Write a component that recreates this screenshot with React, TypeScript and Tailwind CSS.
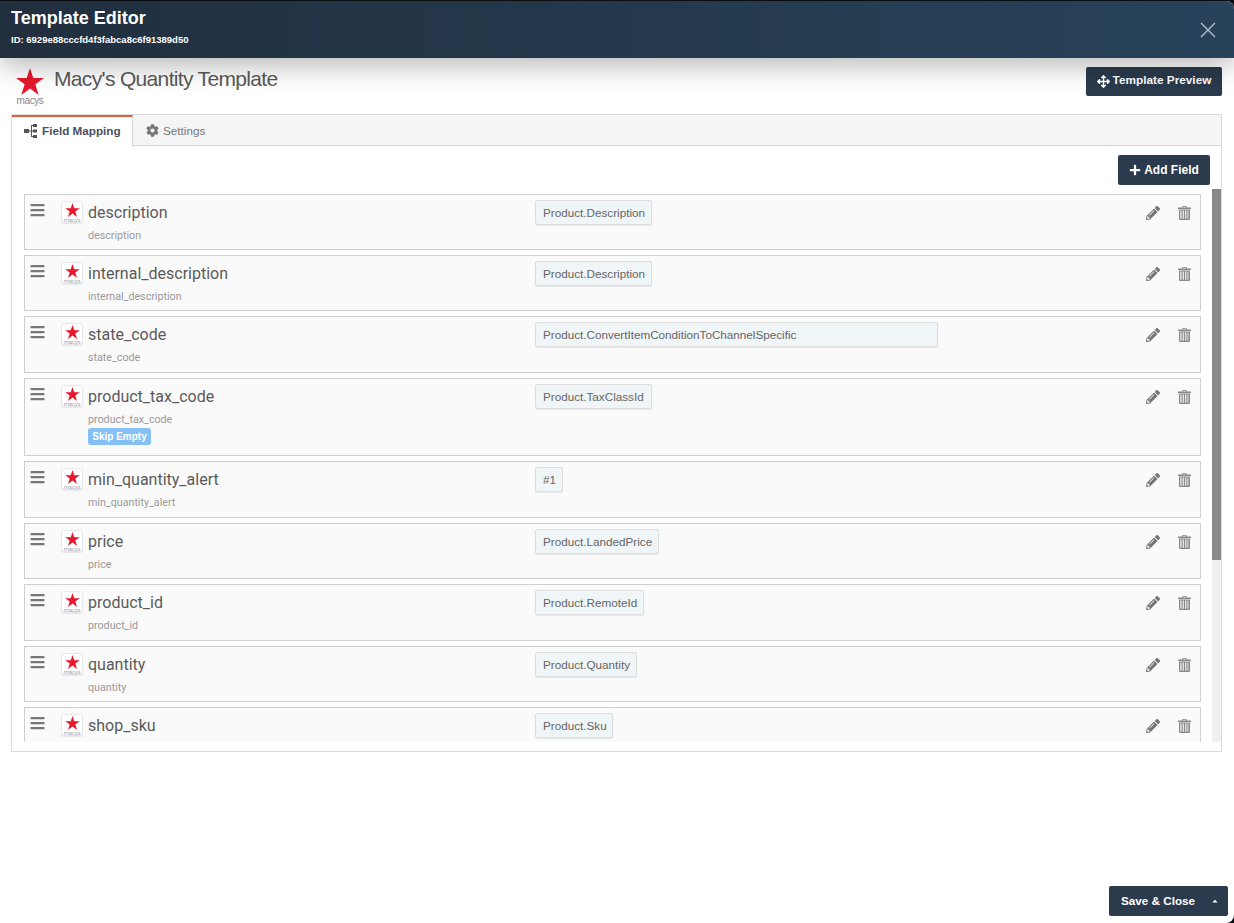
import { FaBars, FaCog, FaPencilAlt, FaPlus, FaArrowsAlt, FaCaretUp } from "react-icons/fa";

type Field = {
  name: string;
  source: string;
  width: string;
  skipEmpty?: boolean;
};

const fields: Field[] = [
  { name: "description", source: "Product.Description", width: "w-[117px]" },
  { name: "internal_description", source: "Product.Description", width: "w-[117px]" },
  { name: "state_code", source: "Product.ConvertItemConditionToChannelSpecific", width: "w-[403px]" },
  { name: "product_tax_code", source: "Product.TaxClassId", width: "w-[117px]", skipEmpty: true },
  { name: "min_quantity_alert", source: "#1", width: "w-[28px]" },
  { name: "price", source: "Product.LandedPrice", width: "w-[124px]" },
  { name: "product_id", source: "Product.RemoteId", width: "w-[109px]" },
  { name: "quantity", source: "Product.Quantity", width: "w-[102px]" },
  { name: "shop_sku", source: "Product.Sku", width: "w-[78px]" },
];

function Star({ className }: { className: string }) {
  return (
    <svg viewBox="0 0 24 23" className={className} fill="currentColor">
      <path d="M12 0l2.83 8.6H24l-7.42 5.32L19.42 23 12 17.4 4.58 23l2.84-9.08L0 8.6h9.17z" />
    </svg>
  );
}

function MacysLogo({ large }: { large?: boolean }) {
  if (large) {
    return (
      <div className="flex h-[38px] w-[38px] shrink-0 flex-col items-center rounded-[4px] bg-white">
        <Star className="mt-[1px] h-[27px] w-[28px] text-[#e8172c]" />
        <span className="mt-[1px] text-[10px] leading-[9px] font-light tracking-[-0.4px] text-[#888]">macys</span>
      </div>
    );
  }
  return (
    <div className="flex h-[22px] w-[22px] shrink-0 flex-col items-center rounded-[3px] border border-[#e8e8e8] bg-white shadow-[0_1px_1px_rgba(0,0,0,0.08)]">
      <Star className="mt-[1px] h-[14px] w-[15px] text-[#e8172c]" />
      <span className="text-[6px] leading-[5px] tracking-[-0.2px] text-[#aaa]">macys</span>
    </div>
  );
}

function FieldMappingIcon() {
  return (
    <svg viewBox="0 0 14 14" className="h-[14px] w-[14px] text-[#555]" fill="currentColor">
      <rect x="0" y="5" width="5" height="4" />
      <rect x="9" y="0" width="4" height="3" />
      <rect x="9" y="5.5" width="4" height="3" />
      <rect x="9" y="11" width="4" height="3" />
      <path d="M5 6.5h2V1h2v1H8v4.5h1v1H8V12h1v1H7V7.5H5z" />
    </svg>
  );
}

function TrashIcon() {
  return (
    <svg viewBox="0 0 13 14" className="h-[14px] w-[13px] text-[#888]" fill="currentColor">
      <path d="M4.5 0h4l.6 1.5H13v1.4H0V1.500h3.900zM5 .8l-.3.7h3.600L8 .8z" />
      <path d="M1 3.600h11V13a1 1 0 0 1-1 1H2a1 1 0 0 1-1-1zm1.300 1v8.200h1.200V4.600zm2.400 0v8.200h1.100V4.600zm2.500 0v8.200h1.100V4.600zm2.300 0v8.200h.9V4.600z" fillRule="evenodd" />
    </svg>
  );
}

function FieldRow({ field }: { field: Field }) {
  return (
    <div className="mb-[5px] flex min-h-[56.4px] shrink-0 items-start border border-[#cfcfcf] bg-[#fafafa] pt-[5px]">
      <FaBars className="mt-[2px] ml-[5px] h-[16px] w-[15px] text-[#777]" />
      <div className="mt-[1px] ml-[16px]">
        <MacysLogo />
      </div>
      <div className="ml-[5px] w-[447px] shrink-0">
        <div className="mt-[2px] text-[16px] leading-[22px] text-[#5a5a5a]">{field.name}</div>
        <div className="mt-[5px] text-[10.7px] leading-[14px] text-[#999]">{field.name}</div>
        {field.skipEmpty && (
          <span className="mt-[1px] mb-[10.6px] block w-[63px] rounded-[3px] bg-[#84c0f4] text-center font-['Liberation_Sans',sans-serif] text-[10px] leading-[17px] font-bold text-white">
            Skip Empty
          </span>
        )}
      </div>
      <div
        className={`${field.width} h-[25px] shrink-0 rounded-[2px] border border-[#dedede] bg-[#f0f5f7] px-[7px] font-['Liberation_Sans',sans-serif] text-[11.7px] leading-[24px] whitespace-nowrap text-[#666] shadow-[0_1px_1px_rgba(0,0,0,0.08)]`}
      >
        {field.source}
      </div>
      <div className="ml-auto flex items-center gap-[18px] pt-[6px] pr-[9px]">
        <FaPencilAlt className="h-[14px] w-[14px] text-[#777]" />
        <TrashIcon />
      </div>
    </div>
  );
}

export default function App() {
  return (
    <div className="h-[923px] w-[1234px] overflow-hidden bg-[#0a0d12] pt-[1px] font-['Roboto',sans-serif]">
      <div className="flex h-[922px] flex-col rounded-tr-[8px] rounded-br-[8px] bg-white">
        <header className="relative z-10 flex h-[57px] shrink-0 items-start justify-between rounded-tr-[8px] bg-gradient-to-r from-[#212f3e] to-[#27425a] pl-[11px] font-['Liberation_Sans',sans-serif] text-white shadow-[0_8px_28px_rgba(0,0,0,0.28)]">
          <div>
            <h1 className="mt-[6px] text-[18px] leading-[22px] font-bold">Template Editor</h1>
            <p className="mt-[2px] text-[9.5px] leading-[18px] font-bold">ID: 6929e88cccfd4f3fabca8c6f91389d50</p>
          </div>
          <button className="mt-[21px] mr-[18px] text-[#b4bfc9]">
            <svg viewBox="0 0 16 16" className="h-[16px] w-[16px]" stroke="currentColor" strokeWidth="1.4" fill="none">
              <path d="M1 1l14 14M15 1L1 15" />
            </svg>
          </button>
        </header>

        <div className="flex h-[56px] shrink-0 items-start justify-between pt-[9px] pr-[12px] pl-[11px] font-['Liberation_Sans',sans-serif]">
          <div className="flex items-start">
            <MacysLogo large />
            <h2 className="ml-[5px] text-[21px] leading-[24px] tracking-[-0.66px] text-[#5a5a5a]">Macy's Quantity Template</h2>
          </div>
          <button className="flex h-[29px] w-[136px] items-center justify-center gap-[3px] rounded-[2px] bg-[#2b3a4c] pb-[1px] text-[11.8px] font-bold text-white">
            <FaArrowsAlt className="h-[13px] w-[13px]" />
            Template Preview
          </button>
        </div>

        <div className="mr-[12px] ml-[11px] flex h-[638px] shrink-0 flex-col border border-[#dcdcdc]">
          <div className="flex h-[31px] shrink-0 border-b border-[#d5d5d5] bg-[#f5f5f5] font-['Liberation_Sans',sans-serif] text-[11.7px]">
            <div className="-mb-[1px] flex h-[32px] w-[121px] items-center gap-[4px] border-t-2 border-r border-t-[#e95d35] border-r-[#d5d5d5] bg-white pb-[2px] pl-[12px] font-bold text-[#4a5260]">
              <FieldMappingIcon />
              Field Mapping
            </div>
            <div className="flex items-center gap-[4px] pt-[1px] pl-[13px] text-[#777]">
              <FaCog className="h-[13px] w-[13px]" />
              Settings
            </div>
          </div>
          <div className="flex h-[42px] shrink-0 justify-end pt-[9px] pr-[11px]">
            <button className="flex h-[30px] w-[92px] items-center justify-center gap-[3px] rounded-[2px] bg-[#2b3a4c] pb-[1px] font-['Liberation_Sans',sans-serif] text-[12px] font-bold text-white">
              <FaPlus className="h-[12px] w-[12px]" />
              Add Field
            </button>
          </div>
          <div className="flex h-[554px] shrink-0 pl-[12px]">
            <div className="mt-[5.6px] flex w-[1177px] shrink-0 flex-col overflow-hidden">
              {fields.map((field) => (
                <FieldRow key={field.name} field={field} />
              ))}
            </div>
            <div className="mt-[1px] ml-[11px] w-[9px] bg-[#f0f0f0]">
              <div className="h-[371px] bg-[#8a8a8a]" />
            </div>
          </div>
        </div>

        <div className="mt-auto mr-[6px] mb-[7px] flex justify-end font-['Liberation_Sans',sans-serif]">
          <button className="flex h-[30px] w-[119px] items-center rounded-[2px] bg-[#2b3a4c] pl-[12px] text-[11.7px] font-bold text-white">
            Save &amp; Close
            <FaCaretUp className="mr-[9px] ml-auto h-[8px] w-[8px]" />
          </button>
        </div>
      </div>
    </div>
  );
}
